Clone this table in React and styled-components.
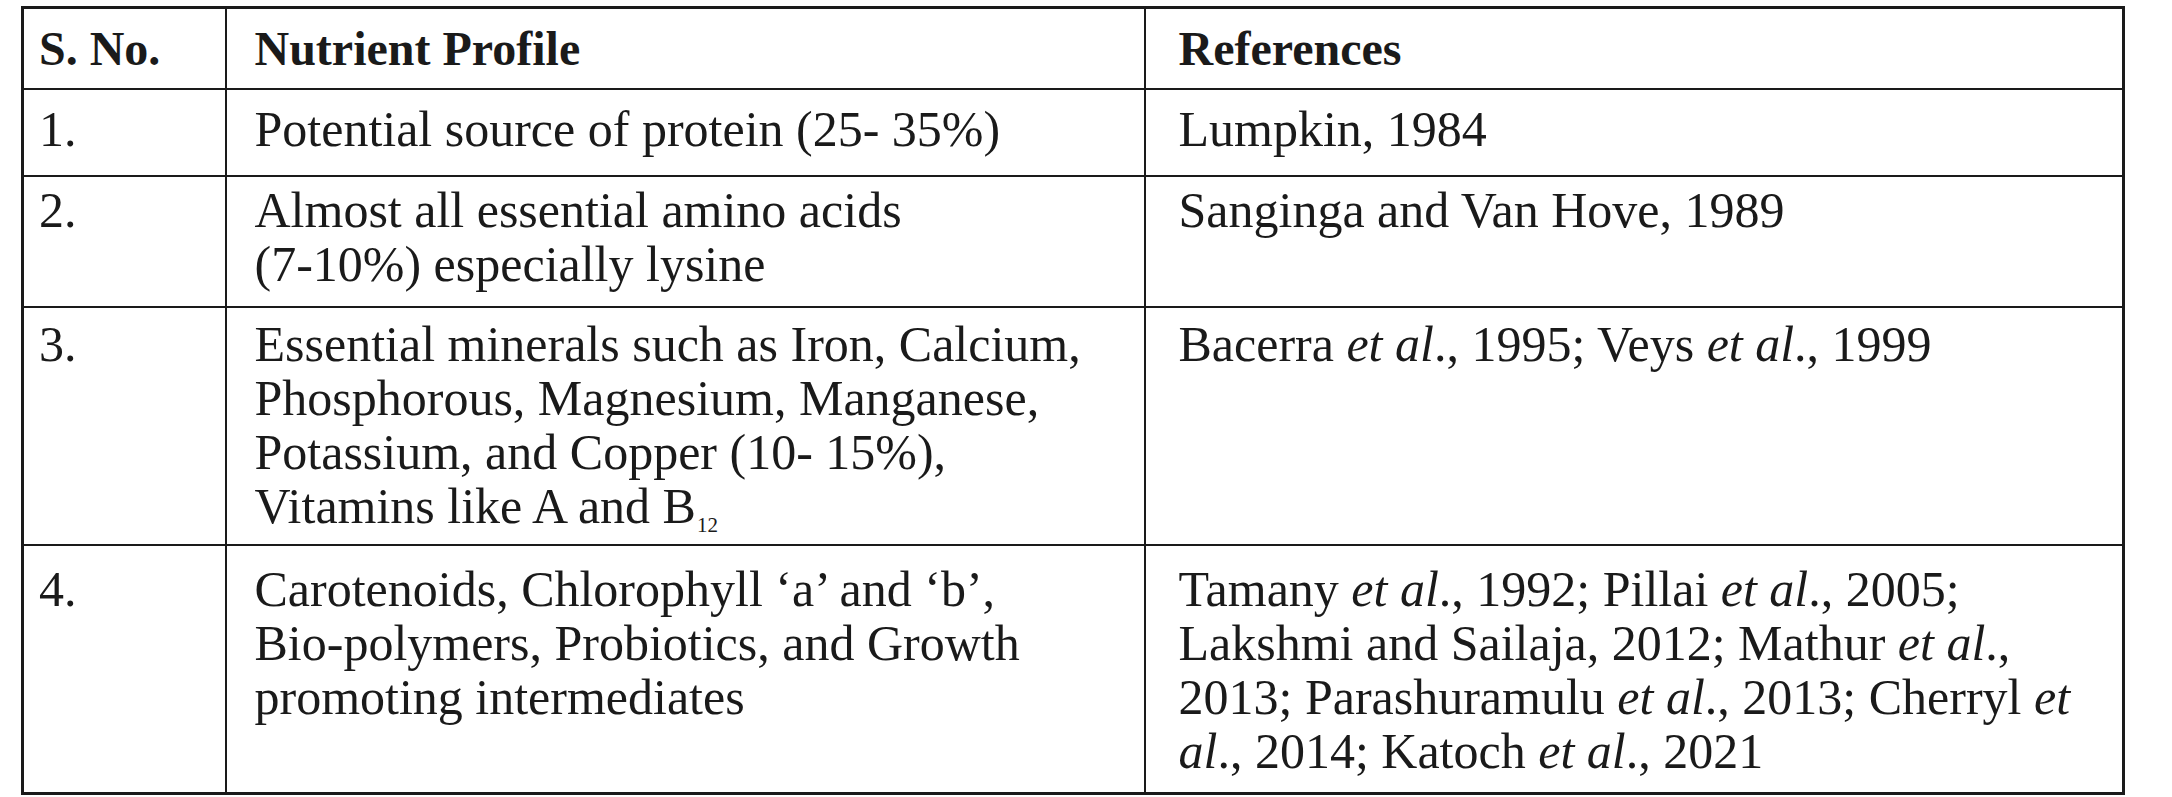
import React from 'react';
import styled, { createGlobalStyle } from 'styled-components';

const GlobalStyle = createGlobalStyle`
  html, body {
    margin: 0;
    padding: 0;
    background: #fff;
  }
`;

const Page = styled.div`
  padding: 6px 0 0 21px;
  font-family: 'Liberation Serif', 'Times New Roman', serif;
  color: #1a1a1a;
`;

const Table = styled.table`
  border-collapse: collapse;
  border: 3px solid #1a1a1a;
  table-layout: fixed;
  width: 2101px;
`;

const Row = styled.tr`
  height: ${p => p.$h}px;
`;

const Cell = styled.td`
  border: 2px solid #1a1a1a;
  vertical-align: top;
  padding: ${p => p.$top}px 10px 0 ${p => p.$left}px;
  font-size: 50px;
  line-height: 54px;
  white-space: nowrap;
`;

const HeadCell = styled(Cell).attrs({ as: 'th' })`
  font-size: 48px;
  font-weight: 700;
  text-align: left;
`;

const Em = styled.i`
  font-style: italic;
`;

const Sub = styled.sub`
  font-size: 21px;
  vertical-align: -9px;
  line-height: 0;
  margin-left: 1px;
`;

const pads = [15, 28, 33];

export default function App() {
  return (
    <Page>
      <GlobalStyle />
      <Table>
        <colgroup>
          <col style={{ width: 203 }} />
          <col style={{ width: 919 }} />
          <col style={{ width: 979 }} />
        </colgroup>
        <thead>
          <Row $h={81}>
            <HeadCell $top={13} $left={pads[0]}>S. No.</HeadCell>
            <HeadCell $top={13} $left={pads[1]}>Nutrient Profile</HeadCell>
            <HeadCell $top={13} $left={pads[2]}>References</HeadCell>
          </Row>
        </thead>
        <tbody>
          <Row $h={87}>
            <Cell $top={12} $left={pads[0]}>1.</Cell>
            <Cell $top={12} $left={pads[1]}>Potential source of protein (25- 35%)</Cell>
            <Cell $top={12} $left={pads[2]}>Lumpkin, 1984</Cell>
          </Row>
          <Row $h={131}>
            <Cell $top={6} $left={pads[0]}>2.</Cell>
            <Cell $top={6} $left={pads[1]}>
              Almost all essential amino acids<br />
              (7-10%) especially lysine
            </Cell>
            <Cell $top={6} $left={pads[2]}>Sanginga and Van Hove, 1989</Cell>
          </Row>
          <Row $h={238}>
            <Cell $top={9} $left={pads[0]}>3.</Cell>
            <Cell $top={9} $left={pads[1]}>
              Essential minerals such as Iron, Calcium,<br />
              Phosphorous, Magnesium, Manganese,<br />
              Potassium, and Copper (10- 15%),<br />
              Vitamins like A and B<Sub>12</Sub>
            </Cell>
            <Cell $top={9} $left={pads[2]}>
              Bacerra <Em>et al</Em>., 1995; Veys <Em>et al</Em>., 1999
            </Cell>
          </Row>
          <Row $h={249}>
            <Cell $top={16} $left={pads[0]}>4.</Cell>
            <Cell $top={16} $left={pads[1]}>
              Carotenoids, Chlorophyll ‘a’ and ‘b’,<br />
              Bio-polymers, Probiotics, and Growth<br />
              promoting intermediates
            </Cell>
            <Cell $top={16} $left={pads[2]}>
              Tamany <Em>et al</Em>., 1992; Pillai <Em>et al</Em>., 2005;<br />
              Lakshmi and Sailaja, 2012; Mathur <Em>et al</Em>.,<br />
              2013; Parashuramulu <Em>et al</Em>., 2013; Cherryl <Em>et</Em><br />
              <Em>al</Em>., 2014; Katoch <Em>et al</Em>., 2021
            </Cell>
          </Row>
        </tbody>
      </Table>
    </Page>
  );
}
